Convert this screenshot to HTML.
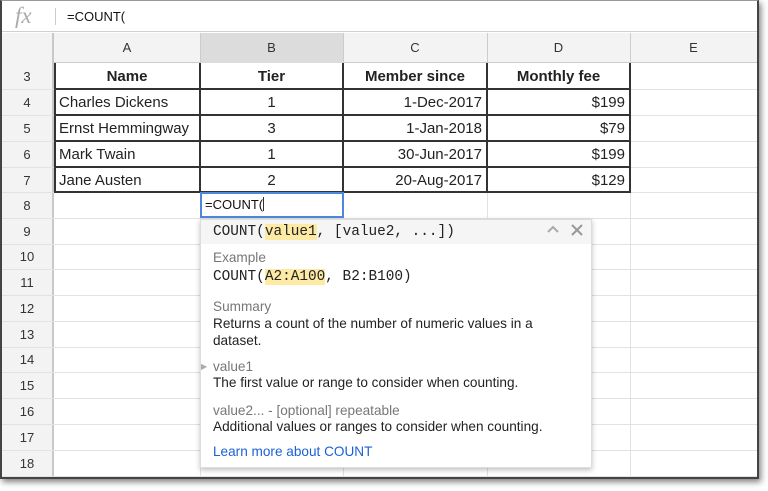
<!DOCTYPE html>
<html><head><meta charset="utf-8"><style>
*{margin:0;padding:0;box-sizing:border-box}
body{width:768px;height:491px;background:#fff;position:relative;overflow:hidden;font-family:"Liberation Sans",Arial,sans-serif;color:#222}
.a{position:absolute}
.h{position:absolute;height:1px;background:#e2e2e2}
.v{position:absolute;width:1px;background:#e2e2e2}
.rn{position:absolute;left:0;width:54px;text-align:center;font-size:13px;color:#333}
.t{position:absolute;font-size:15px;white-space:nowrap}
.mono{font-family:"Liberation Mono",monospace}
.hl{background:#fdeaa5}
.p{font-size:13.6px}
</style></head><body>
<div class="a" style="left:0;top:0;width:759px;height:479px;border:2px solid #444;border-top:1px solid #999;box-shadow:2px 3px 6px rgba(0,0,0,.5)"></div>
<div class="a" style="left:2px;top:1px;width:755px;height:31px;background:#fff;border-bottom:1px solid #d0d0d0"></div>
<div class="t" style="left:15px;top:3px;font-family:'Liberation Serif',serif;font-style:italic;font-size:23px;color:#aaa">fx</div>
<div class="v" style="left:55px;top:8px;height:17px;background:#ccc"></div>
<div class="t" style="left:67px;top:9px;font-size:13px;color:#111">=COUNT(</div>
<div class="a" style="left:2px;top:33px;width:755px;height:30px;background:#f3f3f3;border-bottom:1px solid #ccc"></div>
<div class="a" style="left:200px;top:33px;width:143px;height:30px;background:#dcdcdc"></div>
<div class="a" style="left:2px;top:33px;width:52px;height:444px;background:#f3f3f3;border-right:2px solid #c8c8c8"></div>
<div class="v" style="left:200px;top:33px;height:30px;background:#ccc"></div>
<div class="v" style="left:343px;top:33px;height:30px;background:#ccc"></div>
<div class="v" style="left:487px;top:33px;height:30px;background:#ccc"></div>
<div class="v" style="left:630px;top:33px;height:30px;background:#ccc"></div>
<div class="t" style="left:54px;width:146px;top:40px;text-align:center;font-size:13px;color:#333">A</div>
<div class="t" style="left:200px;width:143px;top:40px;text-align:center;font-size:13px;color:#333">B</div>
<div class="t" style="left:343px;width:144px;top:40px;text-align:center;font-size:13px;color:#333">C</div>
<div class="t" style="left:487px;width:143px;top:40px;text-align:center;font-size:13px;color:#333">D</div>
<div class="t" style="left:630px;width:127px;top:40px;text-align:center;font-size:13px;color:#333">E</div>
<div class="h" style="left:2px;width:755px;top:89px"></div>
<div class="h" style="left:2px;width:755px;top:115px"></div>
<div class="h" style="left:2px;width:755px;top:141px"></div>
<div class="h" style="left:2px;width:755px;top:167px"></div>
<div class="h" style="left:2px;width:755px;top:192px"></div>
<div class="h" style="left:2px;width:755px;top:218px"></div>
<div class="h" style="left:2px;width:755px;top:244px"></div>
<div class="h" style="left:2px;width:755px;top:269px"></div>
<div class="h" style="left:2px;width:755px;top:295px"></div>
<div class="h" style="left:2px;width:755px;top:321px"></div>
<div class="h" style="left:2px;width:755px;top:347px"></div>
<div class="h" style="left:2px;width:755px;top:372px"></div>
<div class="h" style="left:2px;width:755px;top:398px"></div>
<div class="h" style="left:2px;width:755px;top:424px"></div>
<div class="h" style="left:2px;width:755px;top:450px"></div>
<div class="h" style="left:2px;width:755px;top:476px"></div>
<div class="v" style="left:200px;top:63px;height:414px"></div>
<div class="v" style="left:343px;top:63px;height:414px"></div>
<div class="v" style="left:487px;top:63px;height:414px"></div>
<div class="v" style="left:630px;top:63px;height:414px"></div>
<div class="rn" style="top:69px">3</div><div class="rn" style="top:95px">4</div><div class="rn" style="top:121px">5</div><div class="rn" style="top:147px">6</div><div class="rn" style="top:173px">7</div><div class="rn" style="top:198px">8</div><div class="rn" style="top:224px">9</div><div class="rn" style="top:249px">10</div><div class="rn" style="top:275px">11</div><div class="rn" style="top:301px">12</div><div class="rn" style="top:327px">13</div><div class="rn" style="top:352px">14</div><div class="rn" style="top:378px">15</div><div class="rn" style="top:404px">16</div><div class="rn" style="top:430px">17</div><div class="rn" style="top:456px">18</div>
<div class="a" style="left:54px;top:63px;width:577px;height:130px;border:2px solid #333;border-top:none"></div>
<div class="a" style="left:54px;top:88px;width:577px;height:2px;background:#333"></div>
<div class="a" style="left:54px;top:114px;width:577px;height:2px;background:#333"></div>
<div class="a" style="left:54px;top:140px;width:577px;height:2px;background:#333"></div>
<div class="a" style="left:54px;top:166px;width:577px;height:2px;background:#333"></div>
<div class="a" style="left:199px;top:63px;width:2px;height:130px;background:#333"></div>
<div class="a" style="left:342px;top:63px;width:2px;height:130px;background:#333"></div>
<div class="a" style="left:486px;top:63px;width:2px;height:130px;background:#333"></div>
<div class="t" style="left:54px;width:146px;top:68px;text-align:center;font-weight:bold">Name</div>
<div class="t" style="left:200px;width:143px;top:68px;text-align:center;font-weight:bold">Tier</div>
<div class="t" style="left:343px;width:144px;top:68px;text-align:center;font-weight:bold">Member since</div>
<div class="t" style="left:487px;width:143px;top:68px;text-align:center;font-weight:bold">Monthly fee</div>
<div class="t" style="left:59px;top:94px">Charles Dickens</div><div class="t" style="left:200px;width:143px;top:94px;text-align:center">1</div><div class="t" style="left:343px;width:139px;top:94px;text-align:right">1-Dec-2017</div><div class="t" style="left:487px;width:138px;top:94px;text-align:right">$199</div>
<div class="t" style="left:59px;top:120px">Ernst Hemmingway</div><div class="t" style="left:200px;width:143px;top:120px;text-align:center">3</div><div class="t" style="left:343px;width:139px;top:120px;text-align:right">1-Jan-2018</div><div class="t" style="left:487px;width:138px;top:120px;text-align:right">$79</div>
<div class="t" style="left:59px;top:146px">Mark Twain</div><div class="t" style="left:200px;width:143px;top:146px;text-align:center">1</div><div class="t" style="left:343px;width:139px;top:146px;text-align:right">30-Jun-2017</div><div class="t" style="left:487px;width:138px;top:146px;text-align:right">$199</div>
<div class="t" style="left:59px;top:172px">Jane Austen</div><div class="t" style="left:200px;width:143px;top:172px;text-align:center">2</div><div class="t" style="left:343px;width:139px;top:172px;text-align:right">20-Aug-2017</div><div class="t" style="left:487px;width:138px;top:172px;text-align:right">$129</div>
<div class="a" style="left:200px;top:192px;width:144px;height:26px;border:2px solid #4a89dc;background:#fff"></div>
<div class="t" style="left:205px;top:197px;font-size:13px;color:#111">=COUNT(<span style="display:inline-block;width:1px;height:14px;background:#333;vertical-align:-2px"></span></div>
<div class="a" style="left:200px;top:219px;width:392px;height:249px;background:#fff;border:1px solid #ddd;box-shadow:0 2px 5px rgba(0,0,0,.25)"></div>
<div class="a" style="left:201px;top:220px;width:390px;height:24px;background:#f5f5f5"></div>
<div class="t mono" style="left:213px;top:224px;font-size:14.4px;color:#222">COUNT(<span class="hl">value1</span>, [value2, ...])</div>
<svg class="a" style="left:546px;top:225px" width="14" height="10"><path d="M2 7 L7 2 L12 7" fill="none" stroke="#aaa" stroke-width="2"/></svg>
<svg class="a" style="left:571px;top:224px" width="12" height="12"><path d="M1 1 L11 11 M11 1 L1 11" fill="none" stroke="#999" stroke-width="2"/></svg>
<div class="t p" style="left:213px;top:250px;color:#777">Example</div>
<div class="t mono" style="left:213px;top:269px;font-size:14.4px;color:#222">COUNT(<span class="hl">A2:A100</span>, B2:B100)</div>
<div class="t p" style="left:213px;top:299px;color:#777">Summary</div>
<div class="t p" style="left:213px;top:315px;color:#222;line-height:17px">Returns a count of the number of numeric values in a<br>dataset.</div>
<div class="t" style="left:201px;top:362px;font-size:8px;color:#aaa">&#9654;</div>
<div class="t p" style="left:213px;top:359px;color:#777">value1</div>
<div class="t p" style="left:213px;top:375px;color:#222">The first value or range to consider when counting.</div>
<div class="t p" style="left:213px;top:403px;color:#777">value2... - [optional] repeatable</div>
<div class="t p" style="left:213px;top:419px;color:#222">Additional values or ranges to consider when counting.</div>
<div class="t p" style="left:213px;top:444px;color:#1a62d6">Learn more about COUNT</div>
</body></html>
